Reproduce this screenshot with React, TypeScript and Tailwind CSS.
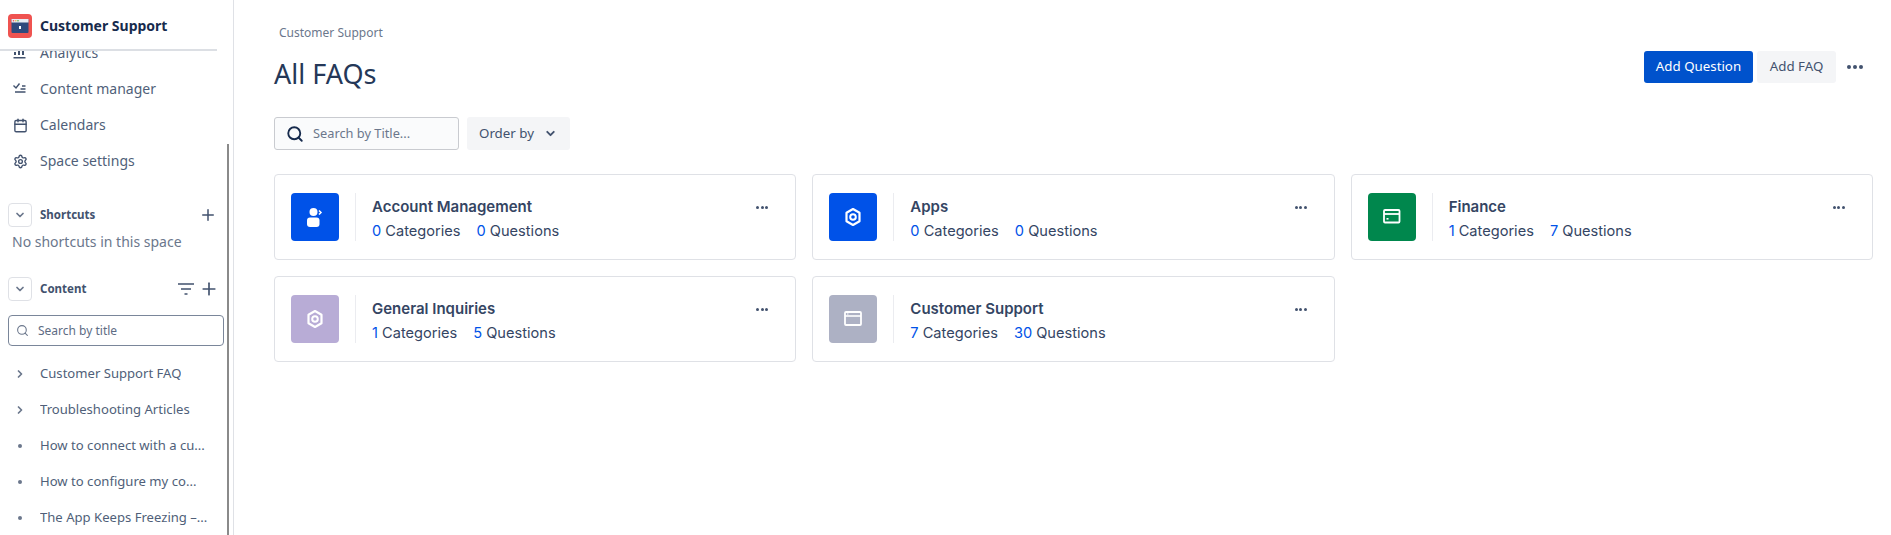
import React from "react";
import { Calendar, ChevronDown, ChevronRight, Plus, Search, Settings } from "lucide-react";

interface Faq {
  title: string;
  categories: number;
  questions: number;
  color: string;
  icon: "person" | "hex" | "card" | "window";
}

const faqs: Faq[] = [
  { title: "Account Management", categories: 0, questions: 0, color: "bg-[#0052e8]", icon: "person" },
  { title: "Apps", categories: 0, questions: 0, color: "bg-[#0052e8]", icon: "hex" },
  { title: "Finance", categories: 1, questions: 7, color: "bg-[#00874d]", icon: "card" },
  { title: "General Inquiries", categories: 1, questions: 5, color: "bg-[#b8acd6]", icon: "hex" },
  { title: "Customer Support", categories: 7, questions: 30, color: "bg-[#adb1c4]", icon: "window" },
];

const pages = [
  { label: "Customer Support FAQ", folder: true },
  { label: "Troubleshooting Articles", folder: true },
  { label: "How to connect with a cu...", folder: false },
  { label: "How to configure my co...", folder: false },
  { label: "The App Keeps Freezing –...", folder: false },
];

const Dots = ({ big }: { big?: boolean }) => (
  <div className={`flex items-center ${big ? "gap-[2px]" : "gap-[1.5px]"}`}>
    {[0, 1, 2].map((i) => (
      <span key={i} className={`rounded-full bg-[#42526e] ${big ? "w-1 h-1" : "w-[3px] h-[3px]"}`}></span>
    ))}
  </div>
);

const CardIcon = ({ icon }: { icon: Faq["icon"] }) => {
  if (icon === "person") {
    return (
      <svg width="24" height="24" viewBox="0 0 24 24" fill="white">
        <circle cx="10.5" cy="7" r="4" />
        <rect x="4" y="12.5" width="12.5" height="9.5" rx="3" />
        <path d="M16 5.5l2 2-2 2" fill="none" stroke="white" strokeWidth="1.5" />
      </svg>
    );
  }
  if (icon === "hex") {
    return (
      <svg width="24" height="24" viewBox="0 0 24 24" fill="none" stroke="white">
        <path d="M12 4l6.5 3.75v8.5L12 20l-6.5-3.75v-8.5z" strokeWidth="2.2" strokeLinejoin="round" />
        <circle cx="12" cy="12" r="2.8" strokeWidth="2" />
      </svg>
    );
  }
  if (icon === "card") {
    return (
      <svg width="24" height="24" viewBox="0 0 24 24" fill="none" stroke="white">
        <rect x="4" y="5" width="15.5" height="12.5" rx="1" strokeWidth="1.8" />
        <path d="M4 9h15.5" strokeWidth="1.8" />
        <rect x="6.5" y="13" width="2" height="1.6" fill="white" stroke="none" />
      </svg>
    );
  }
  return (
    <svg width="24" height="24" viewBox="0 0 24 24" fill="none" stroke="white">
      <rect x="4" y="5" width="16" height="13" rx="1" strokeWidth="1.8" />
      <path d="M4 9h16" strokeWidth="1.6" />
      <path d="M6 7h1.5" strokeWidth="1.2" />
    </svg>
  );
};

const SectionHeader = ({ label, children }: { label: string; children: React.ReactNode }) => (
  <div className="flex items-center h-6 pl-2 pr-[15px]">
    <div className="w-6 h-6 rounded border border-[#dfe1e6] flex items-center justify-center">
      <ChevronDown size={12} strokeWidth={3.5} className="text-[#6b778c]" />
    </div>
    <span className="ml-2 text-[11.5px] font-bold text-[#42526e]">{label}</span>
    <div className="ml-auto flex items-center gap-1">{children}</div>
  </div>
);

const NavRow = ({ icon, label }: { icon: React.ReactNode; label: string }) => (
  <div className="flex items-center h-9 text-sm text-[#505f79]">
    <div className="w-10 flex justify-center">{icon}</div>
    <span>{label}</span>
  </div>
);

const Sidebar = () => (
  <aside className="relative w-[234px] shrink-0 h-full border-r border-[#dfe1e6] overflow-hidden">
    <div className="relative z-10 h-[51px] bg-white flex items-center pl-2 pt-[2px] w-[217px] border-b-2 border-[#dcdfe4]">
      <svg width="24" height="24" viewBox="0 0 24 24" className="shrink-0">
        <rect width="24" height="24" rx="4" fill="#ef5350" />
        <rect x="3.5" y="5" width="17" height="14" rx="1" fill="#2f4a7d" />
        <rect x="3.5" y="5" width="17" height="3.5" fill="#e8ecf4" />
        <circle cx="5.5" cy="6.8" r=".8" fill="#ef5350" />
        <circle cx="7.8" cy="6.8" r=".8" fill="#f5b642" />
        <circle cx="10" cy="6.8" r=".8" fill="#4caf50" />
        <rect x="11" y="12" width="2" height="3" fill="white" />
      </svg>
      <span className="ml-2 text-sm font-bold text-[#172b4d]">Customer Support</span>
    </div>

    <div className="-mt-[16px]">
      <NavRow
        label="Analytics"
        icon={
          <svg width="16" height="16" viewBox="0 0 16 16" fill="#42526e">
            <rect x="2" y="7" width="2" height="3" />
            <rect x="6" y="3" width="2" height="7" />
            <rect x="10" y="3" width="2" height="7" />
            <rect x="1.5" y="12" width="12" height="1.5" />
          </svg>
        }
      />
      <NavRow
        label="Content manager"
        icon={
          <svg width="16" height="16" viewBox="0 0 16 16" fill="none" stroke="#42526e" strokeWidth="1.4">
            <path d="M1.5 4.5l2.5 2.5 3.5-4.5" />
            <path d="M8.5 8h5M3 11h10.5M10 5h3.5" />
          </svg>
        }
      />
      <NavRow label="Calendars" icon={<Calendar size={15} strokeWidth={2.2} className="text-[#42526e]" />} />
      <NavRow label="Space settings" icon={<Settings size={15} strokeWidth={2.2} className="text-[#42526e]" />} />
    </div>

    <div className="mt-6">
      <SectionHeader label="Shortcuts">
        <Plus size={18} className="text-[#42526e] mr-[1px]" />
      </SectionHeader>
      <p className="pl-3 mt-[5px] text-sm leading-5 text-[#6b778c]">No shortcuts in this space</p>
    </div>

    <div className="mt-[25px]">
      <SectionHeader label="Content">
        <svg width="18" height="16" viewBox="0 0 18 16" fill="none" stroke="#42526e" strokeWidth="1.4">
          <path d="M1 3h16M4 8h10M7.5 13h3" />
        </svg>
        <Plus size={20} className="text-[#42526e] -mr-[1px]" />
      </SectionHeader>
      <div className="ml-2 mt-[14px] w-[216px] h-[31px] rounded border border-[#7a869a] flex items-center pl-[7px]">
        <Search size={13} className="text-[#6b778c]" />
        <span className="ml-[9px] text-xs text-[#5e6c84]">Search by title</span>
      </div>
    </div>

    <div className="mt-[10px]">
      {pages.map((p) => (
        <div key={p.label} className="flex items-center h-9 text-[13.1px] text-[#505f79]">
          <div className="w-10 flex justify-center shrink-0">
            {p.folder ? (
              <ChevronRight size={12} strokeWidth={3.5} className="shrink-0 text-[#6b778c]" />
            ) : (
              <span className="w-1 h-1 rounded-full bg-[#6b778c] shrink-0"></span>
            )}
          </div>
          <span className="truncate">{p.label}</span>
        </div>
      ))}
    </div>

    {/* scrollbar thumb */}
    <div className="absolute top-[144px] bottom-0 left-[227px] w-[2px] bg-[#8a8a8a]"></div>
  </aside>
);

const FaqCard = ({ faq }: { faq: Faq }) => (
  <div className="h-[86px] rounded border border-[#dfe1e6] bg-white flex items-center pl-4 pr-[27px]">
    <div className={`w-12 h-12 rounded shrink-0 flex items-center justify-center ${faq.color}`}>
      <CardIcon icon={faq.icon} />
    </div>
    <div className="w-px h-12 bg-[#ebecf0] ml-4 mr-4"></div>
    <div className="flex-1 font-['Inter',sans-serif] pt-[3px]">
      <div className="text-[15px] font-semibold leading-5 text-[#344563]">{faq.title}</div>
      <div className="flex gap-4 text-[14.6px] leading-5 mt-[4px] text-[#344563]">
        <span>
          <span className="text-[#0052e8]">{faq.categories}</span> Categories
        </span>
        <span>
          <span className="text-[#0052e8]">{faq.questions}</span> Questions
        </span>
      </div>
    </div>
    <div className="self-start mt-[31px]">
      <Dots />
    </div>
  </div>
);

export default function App() {
  return (
    <div className="flex h-screen overflow-hidden bg-white font-['Noto_Sans',sans-serif]">
      <Sidebar />
      <main className="flex-1 pl-10 pr-[18px]">
        <div className="pl-[5px] pt-6 text-xs leading-[18px] text-[#6b778c]">Customer Support</div>
        <div className="flex items-start justify-between">
          <h1 className="text-[27px] leading-9 mt-[14px] text-[#253858]">All FAQs</h1>
          <div className="flex items-center mt-[9px] pr-[10px]">
            <button className="h-8 w-[109px] rounded-[3px] bg-[#0052cc] text-[13.3px] text-white">Add Question</button>
            <button className="h-8 w-[79px] ml-1 rounded-[3px] bg-[#f4f5f7] text-[13.3px] text-[#42526e]">Add FAQ</button>
            <div className="ml-[11px]">
              <Dots big />
            </div>
          </div>
        </div>
        <div className="flex gap-2 mt-[25px]">
          <div className="w-[185px] h-[33px] rounded-[3px] border border-[#c9cbd0] bg-[#fafbfc] flex items-center pl-[11px]">
            <Search size={18} strokeWidth={2.5} className="text-[#172b4d]" />
            <span className="ml-[9px] text-[12.8px] pt-[1px] text-[#6b778c]">Search by Title...</span>
          </div>
          <div className="w-[103px] h-[33px] rounded-[3px] bg-[#f4f5f7] flex items-center pl-3 text-[13.3px] text-[#42526e]">
            Order by
            <ChevronDown size={13} strokeWidth={3.5} className="ml-[10px]" />
          </div>
        </div>
        <div className="grid grid-cols-3 gap-x-4 gap-y-4 mt-6">
          {faqs.map((f) => (
            <FaqCard key={f.title} faq={f} />
          ))}
        </div>
      </main>
    </div>
  );
}
